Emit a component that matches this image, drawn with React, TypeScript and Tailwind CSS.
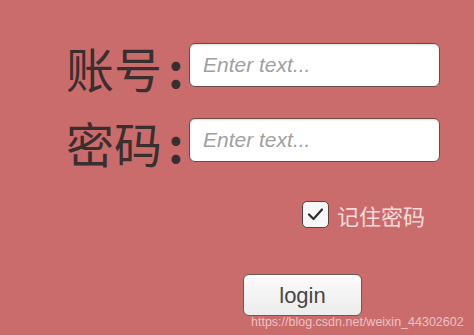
import React from "react";

function Field({ label, top }: { label: string; top: string }) {
  return (
    <div className={`flex items-center h-[44px] ${top}`}>
      <span
        className="flex w-[123px] shrink-0 text-[48px] leading-none text-[#3a2f2f] mt-[4px]"
        style={{ fontFamily: '"Noto Sans CJK SC", sans-serif' }}
      >
        {label}
        <span className="ml-[6px] font-bold">:</span>
      </span>
      <input
        type="text"
        placeholder="Enter text..."
        className="w-[251px] h-[44px] rounded-[6px] border border-[#6b4b4b] bg-white px-[13px] text-[21px] italic text-[#333] placeholder:text-[#a0a0a0] outline-none shadow-[inset_0_1px_2px_rgba(0,0,0,0.15)]"
        style={{ fontFamily: '"Liberation Sans", Arial, sans-serif' }}
      />
    </div>
  );
}

export default function App() {
  return (
    <div className="relative w-[474px] h-[335px] overflow-hidden bg-[#cb6c6c]">
      <div className="flex flex-col pt-[43px] pl-[66px]">
        <Field label="账号" top="" />
        <Field label="密码" top="mt-[31px]" />

        <div className="flex items-center mt-[39px] ml-[236px]">
          <span className="flex h-[27px] w-[27px] items-center justify-center rounded-[5px] border border-[#5a4040] bg-[#f7f7f7]">
            <svg width="19" height="19" viewBox="0 0 19 19" fill="none">
              <path d="M3 9.5 L7.5 14 L16 4.5" stroke="#2d2d2d" strokeWidth="2.2" strokeLinecap="round" strokeLinejoin="round" />
            </svg>
          </span>
          <span
            className="ml-[8px] text-[22px] leading-none text-[#f5dcdc]"
            style={{ fontFamily: '"Noto Sans CJK SC", sans-serif' }}
          >
            记住密码
          </span>
        </div>

        <button
          className="mt-[46px] ml-[177px] flex h-[42px] w-[119px] items-center justify-center rounded-[6px] border border-[#6a5a5a] bg-gradient-to-b from-[#fbfbfb] to-[#ececec] text-[22px] text-[#474747]"
          style={{ fontFamily: '"Liberation Sans", Arial, sans-serif' }}
        >
          login
        </button>
      </div>

      <span
        className="absolute left-[251px] top-[316px] text-[12.5px] leading-none text-[#ffffff]/60"
        style={{ fontFamily: '"Liberation Sans", Arial, sans-serif' }}
      >
        https://blog.csdn.net/weixin_44302602
      </span>
    </div>
  );
}
